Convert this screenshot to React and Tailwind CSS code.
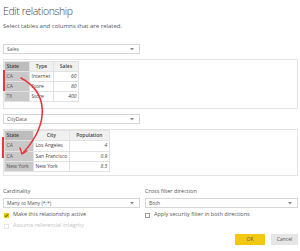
import React from "react";

const font = { fontFamily: '"Open Sans", "Liberation Sans", sans-serif' };

/* ── Dropdown ─────────────────────────────────────────────── */
function Select({ value, className = "" }) {
  return (
    <div className={`flex items-center justify-between h-[10px] border border-[#d6d6d6] bg-white pl-[3px] pr-[5px] ${className}`}>
      <span className="text-[5px] leading-none text-[#555]">{value}</span>
      <svg width="4" height="3" viewBox="0 0 4 3">
        <path d="M0 0 L4 0 L2 2.5 Z" fill="#888" />
      </svg>
    </div>
  );
}

/* ── Preview table ────────────────────────────────────────── */
function Table({ cols, rows, widths, rowH }) {
  return (
    <table className="border-collapse table-fixed text-[5px] leading-none text-[#444]">
      <thead>
        <tr style={{ height: rowH }}>
          {cols.map((c, i) => (
            <th
              key={c}
              style={{ width: widths[i] }}
              className={`border border-[#e2e2e2] px-[1.5px] font-semibold whitespace-nowrap ${i === 0 ? "bg-[#bdbdbd] text-left" : "bg-[#f0f0f0] text-center"}`}
            >
              {c}
            </th>
          ))}
        </tr>
      </thead>
      <tbody>
        {rows.map((r, ri) => (
          <tr key={ri} style={{ height: rowH }}>
            {r.map((v, i) => (
              <td
                key={i}
                className={`border border-[#e2e2e2] px-[1.5px] whitespace-nowrap ${i === 0 ? "bg-[#c9c9c9] text-[#555]" : "bg-white"} ${i === r.length - 1 ? "text-right italic" : "text-left"}`}
              >
                {v}
              </td>
            ))}
          </tr>
        ))}
      </tbody>
    </table>
  );
}

function Check({ checked, disabled, label }) {
  return (
    <div className="flex items-center gap-[4px] h-[8px]">
      <div
        className={`w-[5px] h-[5px] flex items-center justify-center ${checked ? "bg-[#f2c811]" : disabled ? "border border-[#e6e6e6]" : "border border-[#9a9a9a]"}`}
      >
        {checked && (
          <svg width="5" height="5" viewBox="0 0 5 5">
            <path d="M0.9 2.6 L2 3.7 L4.2 1.2" stroke="#333" strokeWidth="0.9" fill="none" />
          </svg>
        )}
      </div>
      <span className={`text-[5.5px] leading-none ${disabled ? "text-[#c4c4c4]" : "text-[#555]"}`}>{label}</span>
    </div>
  );
}

export default function App() {
  return (
    <div className="relative w-[300px] h-[251px] bg-white overflow-hidden pl-[3px] pr-[2px]" style={font}>
      <h1 className="pt-[4px] text-[10.5px] leading-[15px] font-light tracking-[-0.4px] text-[#444]">Edit relationship</h1>
      <p className="mt-[4px] text-[6px] leading-[7px] text-[#555]">Select tables and columns that are related.</p>

      <Select value="Sales" className="mt-[14px] w-[137px]" />
      <div className="mt-[5px] h-[50px] border border-[#e4e4e4] pt-[1px]">
        <Table
          cols={["State", "Type", "Sales"]}
          widths={[25, 24, 25]}
          rowH={10}
          rows={[
            ["CA", "Internet", "60"],
            ["CA", "Store", "80"],
            ["TX", "Store", "400"],
          ]}
        />
      </div>

      <Select value="CityData" className="mt-[5px] w-[137px]" />
      <div className="mt-[5px] h-[47px] border border-[#e4e4e4]">
        <Table
          cols={["State", "City", "Population"]}
          widths={[29, 35, 40]}
          rowH={10.3}
          rows={[
            ["CA", "Los Angeles", "4"],
            ["CA", "San Francisco", "0.9"],
            ["New York", "New York", "8.5"],
          ]}
        />
      </div>

      <div className="mt-[12px] grid grid-cols-[137px_1fr] gap-x-[5px]">
        <div>
          <div className="text-[5.5px] leading-[7px] text-[#555]">Cardinality</div>
          <Select value="Many to Many (*:*)" className="mt-[3px]" />
        </div>
        <div>
          <div className="text-[5.5px] leading-[7px] text-[#555]">Cross filter direction</div>
          <Select value="Both" className="mt-[3px]" />
        </div>
        <div className="mt-[3px] flex flex-col gap-[3px] pl-[1px]">
          <Check checked label="Make this relationship active" />
          <Check disabled label="Assume referential integrity" />
        </div>
        <div className="mt-[3px]">
          <Check label="Apply security filter in both directions" />
        </div>
      </div>

      <div className="absolute right-[2px] top-[234px] flex gap-[6px]">
        <button className="w-[30px] h-[11px] bg-[#f2c811] text-[5px] leading-none text-[#555]">OK</button>
        <button className="w-[27px] h-[11px] bg-[#e6e6e6] text-[5px] leading-none text-[#555]">Cancel</button>
      </div>

      {/* Red annotation overlay */}
      <div className="absolute left-[3px] top-[70px] w-[2px] h-[21px] bg-[#e8383d]" />
      <div className="absolute left-[2px] top-[137px] w-[2px] h-[21px] bg-[#e8383d]" />
      <svg className="absolute left-0 top-0 pointer-events-none" width="300" height="251" viewBox="0 0 300 251">
        <path d="M21 78 C 47 92, 51 122, 23 153" stroke="#e8383d" strokeWidth="1.6" fill="none" strokeLinecap="round" />
        <path d="M20 148 L22 154 L27 151" stroke="#e8383d" strokeWidth="1.4" fill="none" strokeLinecap="round" strokeLinejoin="round" />
      </svg>
    </div>
  );
}
